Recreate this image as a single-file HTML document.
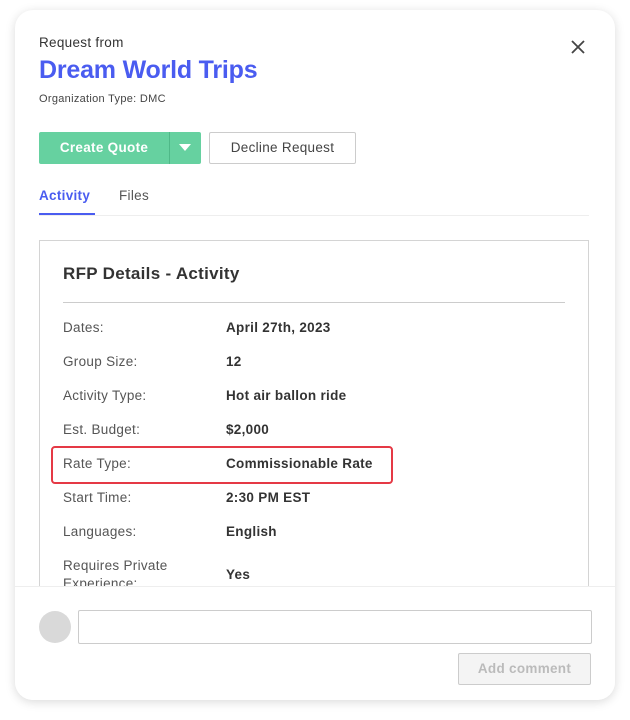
<!DOCTYPE html>
<html><head><style>
body{margin:0;width:630px;height:720px;background:#fff;font-family:"Liberation Sans",sans-serif;position:relative;overflow:hidden}
.card{position:absolute;left:15px;top:10px;width:600px;height:690px;background:#fff;border-radius:18px;box-shadow:0 2px 10px rgba(0,0,0,.15);overflow:hidden}
.a{position:absolute;white-space:nowrap}
.lab{color:#555;font-size:13.5px;letter-spacing:.3px}
.val{color:#333;font-size:13.5px;font-weight:bold;letter-spacing:.3px}
</style></head><body>
<div class="card">
<div class="a" style="left:24px;top:25px;font-size:13.5px;color:#333;letter-spacing:.3px">Request from</div>
<div class="a" style="left:24px;top:46px;font-size:25px;font-weight:bold;color:#4a5cf0;letter-spacing:-.2px">Dream World Trips</div>
<div class="a" style="left:24px;top:83px;font-size:11px;color:#444;letter-spacing:.3px">Organization Type: DMC</div>
<svg class="a" style="left:555px;top:29px" width="16" height="16"><path d="M2 2L14 14M14 2L2 14" stroke="#444" stroke-width="1.8"/></svg>
<div class="a" style="left:24px;top:122px;width:162px;height:32px;background:#66d1a0;border-radius:2px"></div>
<div class="a" style="left:24px;top:130px;width:130px;text-align:center;color:#fff;font-weight:bold;font-size:13.5px;letter-spacing:.3px">Create Quote</div>
<div class="a" style="left:154px;top:122px;width:1px;height:32px;background:#4fb888"></div>
<svg class="a" style="left:164px;top:134px" width="12" height="8"><path d="M0 0L12 0L6 7Z" fill="#fff"/></svg>
<div class="a" style="left:194px;top:122px;width:145px;height:30px;border:1px solid #ccc;border-radius:2px;text-align:center;line-height:30px;font-size:13.5px;color:#444;letter-spacing:.3px">Decline Request</div>
<div class="a" style="left:24px;top:178px;font-size:13.5px;font-weight:bold;color:#4a5cf0;letter-spacing:.3px">Activity</div>
<div class="a" style="left:24px;top:203px;width:56px;height:2px;background:#4a5cf0"></div>
<div class="a" style="left:104px;top:178px;font-size:13.5px;color:#555;letter-spacing:.3px">Files</div>
<div class="a" style="left:24px;top:205px;width:550px;height:1px;background:#eee"></div>
<div class="a" style="left:24px;top:230px;width:548px;height:400px;border:1px solid #d4d4d4"></div>
<div class="a" style="left:48px;top:254px;font-size:17px;font-weight:bold;color:#333;letter-spacing:.3px">RFP Details - Activity</div>
<div class="a" style="left:48px;top:292px;width:502px;height:1px;background:#ccc"></div>
<div class="a lab" style="left:48px;top:310px">Dates:</div><div class="a val" style="left:211px;top:310px">April 27th, 2023</div>
<div class="a lab" style="left:48px;top:344px">Group Size:</div><div class="a val" style="left:211px;top:344px">12</div>
<div class="a lab" style="left:48px;top:378px">Activity Type:</div><div class="a val" style="left:211px;top:378px">Hot air ballon ride</div>
<div class="a lab" style="left:48px;top:412px">Est. Budget:</div><div class="a val" style="left:211px;top:412px">$2,000</div>
<div class="a" style="left:36px;top:436px;width:338px;height:34px;border:2.5px solid #e53945;border-radius:4px"></div>
<div class="a lab" style="left:48px;top:446px">Rate Type:</div><div class="a val" style="left:211px;top:446px">Commissionable Rate</div>
<div class="a lab" style="left:48px;top:480px">Start Time:</div><div class="a val" style="left:211px;top:480px">2:30 PM EST</div>
<div class="a lab" style="left:48px;top:514px">Languages:</div><div class="a val" style="left:211px;top:514px">English</div>
<div class="a lab" style="left:48px;top:548px">Requires Private</div><div class="a lab" style="left:48px;top:566px">Experience:</div><div class="a val" style="left:211px;top:557px">Yes</div>
<div class="a" style="left:0;top:576px;width:600px;height:114px;background:#fff;border-top:1px solid #eee"></div>
<div class="a" style="left:24px;top:601px;width:32px;height:32px;border-radius:50%;background:#d9d9d9"></div>
<div class="a" style="left:63px;top:600px;width:512px;height:32px;border:1px solid #ccc;border-radius:2px"></div>
<div class="a" style="left:443px;top:643px;width:131px;height:30px;border:1px solid #ccc;background:#f4f4f4;border-radius:2px;text-align:center;line-height:30px;font-size:13.5px;font-weight:bold;color:#bbb;letter-spacing:.3px">Add comment</div>
</div>
</body></html>
